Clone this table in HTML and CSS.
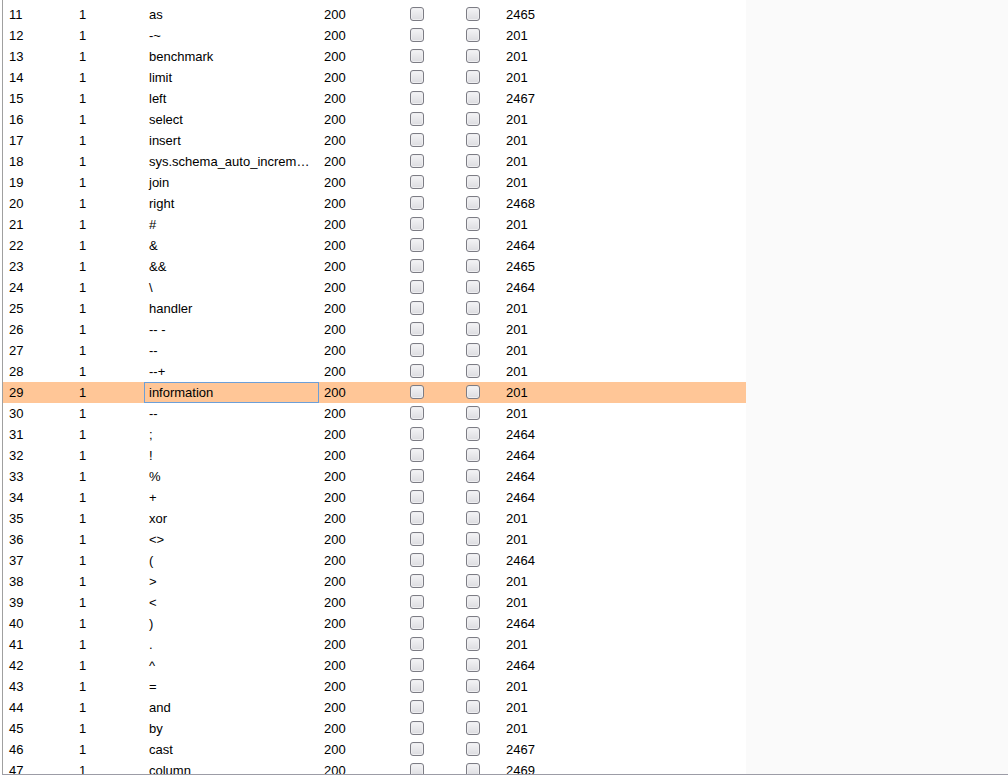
FILE: index.html
```html
<!DOCTYPE html>
<html>
<head>
<meta charset="utf-8">
<link rel="stylesheet" href="styles.css">
</head>
<body>
<div class="viewport">
  <div class="table" id="table"></div>
  <div class="filler"></div>
</div>
<script src="app.js"></script>
</body>
</html>
```
FILE: styles.css
```css
html, body {
  margin: 0;
  padding: 0;
  background: #ffffff;
}
body {
  padding-left: 2px;
  height: 776px;
  overflow: hidden;
  font-family: "Liberation Sans", Arial, sans-serif;
  font-size: 13px;
  color: #000;
}
.viewport {
  border-left: 1px solid #a0a0a0;
  border-bottom: 1px solid #9c9ca6;
  display: flex;
  overflow: hidden;
  background: #fafafa;
  box-sizing: border-box;
  height: 775px;
}
.table {
  width: 743px;
  flex: none;
  background: #ffffff;
  margin-top: -17px;
  align-self: flex-start;
}
.filler {
  flex: 1;
}
.row {
  display: grid;
  grid-template-columns: 71px 70px 175px 70px 56px 56px 245px;
  height: 21px;
}
.row.sel {
  background: #ffc697;
}
.cell {
  line-height: 21px;
  padding: 0 0 0 5px;
  white-space: nowrap;
  overflow: hidden;
  box-sizing: border-box;
}
.cell.first {
  padding-left: 6px;
}
.cell.focus {
  border: 1px solid #6c9fd8;
  padding-left: 4px;
  line-height: 19px;
}
.cell.box {
  display: flex;
  align-items: center;
  justify-content: center;
  padding: 0 0 1px 0;
}
.check {
  width: 12px;
  height: 12px;
  border: 1px solid #7c7c84;
  border-radius: 3px;
  background: linear-gradient(#f4f4f6, #dcdce0);
  box-shadow: inset 0 0 0 1px #eeeef0;
}
```
FILE: app.js
```js
var data = [
  [10, "", 0],
  [11, "as", 2465],
  [12, "-~", 201],
  [13, "benchmark", 201],
  [14, "limit", 201],
  [15, "left", 2467],
  [16, "select", 201],
  [17, "insert", 201],
  [18, "sys.schema_auto_increm\u2026", 201],
  [19, "join", 201],
  [20, "right", 2468],
  [21, "#", 201],
  [22, "&", 2464],
  [23, "&&", 2465],
  [24, "\\", 2464],
  [25, "handler", 201],
  [26, "-- -", 201],
  [27, "--", 201],
  [28, "--+", 201],
  [29, "information", 201],
  [30, "--", 201],
  [31, ";", 2464],
  [32, "!", 2464],
  [33, "%", 2464],
  [34, "+", 2464],
  [35, "xor", 201],
  [36, "<>", 201],
  [37, "(", 2464],
  [38, ">", 201],
  [39, "<", 201],
  [40, ")", 2464],
  [41, ".", 201],
  [42, "^", 2464],
  [43, "=", 201],
  [44, "and", 201],
  [45, "by", 201],
  [46, "cast", 2467],
  [47, "column", 2469]
];
var t = document.getElementById("table");
data.forEach(function (d) {
  var hidden = d[0] === 10;
  var r = document.createElement("div");
  r.className = "row" + (d[0] === 29 ? " sel" : "");
  function cell(text, cls) {
    var c = document.createElement("div");
    c.className = "cell" + (cls ? " " + cls : "");
    if (text !== null && !hidden) c.textContent = text;
    r.appendChild(c);
    return c;
  }
  cell(String(d[0]), "first");
  cell("1");
  cell(d[1], d[0] === 29 ? "focus" : "");
  cell("200");
  for (var i = 0; i < 2; i++) {
    var b = cell(null, "box");
    var k = document.createElement("div");
    k.className = "check";
    b.appendChild(k);
  }
  cell(String(d[2]));
  t.appendChild(r);
});
```
